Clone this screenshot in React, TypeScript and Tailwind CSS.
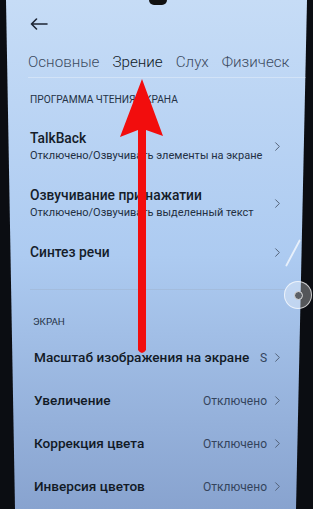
import { ChevronRight } from 'lucide-react'

const Chevron = () => <ChevronRight className="h-[15px] w-[15px] text-[#4d5b70]" strokeWidth={1.5} />

const TwoLine = ({ title, sub, h }: { title: string; sub: string; h: string }) => (
	<div className={`flex items-center justify-between ${h}`}>
		<div className="flex flex-col gap-[2px] whitespace-nowrap">
			<span className="text-[13.8px] leading-[18px] font-medium text-[#151d2a]">{title}</span>
			<span className="text-[11px] leading-[14px] text-[#233043]">{sub}</span>
		</div>
		<Chevron />
	</div>
)

const ValueRow = ({ title, value }: { title: string; value: string }) => (
	<div className="flex h-[43px] items-center justify-between">
		<span className="text-[13.6px] font-medium whitespace-nowrap text-[#121a26]">{title}</span>
		<div className="flex items-center gap-[3px]">
			<span className="text-[12px] text-[#34445c]">{value}</span>
			<Chevron />
		</div>
	</div>
)

export default function App() {
	return (
		<div className="relative h-[509px] w-[313px] overflow-hidden bg-[#0b0d12] font-['Roboto',sans-serif]">
			{/* screen */}
			<div className="absolute inset-0 bg-gradient-to-b from-[#c6dcf6] via-[#adcbf1] to-[#88a3cf] [clip-path:polygon(6px_0,307px_0,296px_509px,15px_509px)]">
				<div className="flex h-full flex-col pr-[28px] pl-[30px]">
					<div className="flex h-[48px] items-center">
						<svg width="18" height="12" viewBox="0 0 18 12" fill="none" stroke="#1c2433" strokeWidth="1.6" strokeLinecap="round" strokeLinejoin="round">
							<path d="M17 6H1.5M6.5 1 1.5 6l5 5" />
						</svg>
					</div>

					<div className="-mr-[28px] -ml-[2px] flex h-[30px] items-center gap-[13px] overflow-hidden border-b border-[#d2e3f7] text-[15.2px] font-light whitespace-nowrap text-[#3c4b61]">
						<span>Основные</span>
						<span className="text-[#0f1826]">Зрение</span>
						<span>Слух</span>
						<span>Физическ</span>
					</div>

					<div className="flex h-[42px] items-center pt-[2px] text-[10.2px] text-[#243245]">ПРОГРАММА ЧТЕНИЯ ЭКРАНА</div>

					<TwoLine h="h-[52px]" title="TalkBack" sub="Отключено/Озвучивать элементы на экране" />
					<TwoLine h="h-[62px]" title="Озвучивание при нажатии" sub="Отключено/Озвучивать выделенный текст" />

					<div className="flex h-[36px] items-center justify-between">
						<span className="text-[13.8px] font-medium text-[#151d2a]">Синтез речи</span>
						<Chevron />
					</div>

					<div className="h-[20px] border-b border-[#a3bcdd]" />

					<div className="flex h-[46px] items-center pt-[18px] pl-[3px] text-[9.8px] text-[#243245]">ЭКРАН</div>

					<div className="pl-[4px]">
						<ValueRow title="Масштаб изображения на экране" value="S" />
						<ValueRow title="Увеличение" value="Отключено" />
						<ValueRow title="Коррекция цвета" value="Отключено" />
						<ValueRow title="Инверсия цветов" value="Отключено" />
					</div>
				</div>
			</div>

			{/* camera notch */}
			<div className="absolute top-[-5px] left-[149px] h-[10px] w-[18px] rounded-full bg-[#111]" />

			{/* glare + suction cup */}
			<div className="absolute top-[238px] left-[292px] h-[30px] w-[2px] rotate-[28deg] rounded-full bg-white/70" />
			<div className="absolute top-[281px] left-[284px] flex h-[28px] w-[28px] items-center justify-center rounded-full border border-white/70 bg-white/30">
				<div className="h-[9px] w-[9px] rounded-full border border-[#ddd] bg-[#5c6066]" />
			</div>

			{/* red arrow */}
			<svg className="absolute top-0 left-0" width="313" height="509" viewBox="0 0 313 509">
				<path d="M142 79 L163 136 L146 130 L146 350 Q142 356 138 350 L138 130 L120 137 Z" fill="#f20d0d" />
			</svg>
		</div>
	)
}
